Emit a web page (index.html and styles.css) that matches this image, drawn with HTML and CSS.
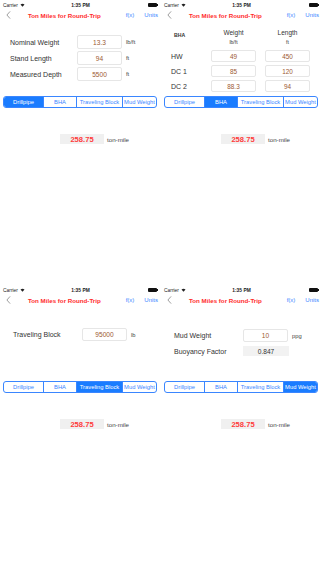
FILE: index.html
```html
<!DOCTYPE html>
<html lang="en">
<head>
    <meta charset="UTF-8">
    <meta name="viewport" content="width=device-width, initial-scale=1.0">
    <title>Ton Miles for Round-Trip</title>
    <link rel="stylesheet" href="styles.css">
</head>
<body>
<div class="grid">

    <!-- Drillpipe screen -->
    <section class="screen">
        <div class="status">
            <span class="carrier">Carrier <svg class="wifi" viewBox="0 0 10 8"><path d="M5 7.5 L1 3.2 A6 6 0 0 1 9 3.2 Z"/></svg></span>
            <span class="clock">1:35 PM</span>
            <span class="battery"></span>
        </div>
        <div class="navbar">
            <svg class="back" viewBox="0 0 6 10"><path d="M5 0.5 L1 5 L5 9.5"/></svg>
            <span class="title">Ton Miles for Round-Trip</span>
            <span class="nav-link fx">f(x)</span>
            <span class="nav-link">Units</span>
        </div>
        <div class="body body-dp">
            <div class="row">
                <span class="label">Nominal Weight</span>
                <span class="field">13.3</span>
                <span class="unit">lb/ft</span>
            </div>
            <div class="row">
                <span class="label">Stand Length</span>
                <span class="field">94</span>
                <span class="unit">ft</span>
            </div>
            <div class="row">
                <span class="label">Measured Depth</span>
                <span class="field">5500</span>
                <span class="unit">ft</span>
            </div>
        </div>
        <div class="segments">
            <span class="seg s1 active">Drillpipe</span>
            <span class="seg s2">BHA</span>
            <span class="seg s3">Traveling Block</span>
            <span class="seg s4">Mud Weight</span>
        </div>
        <div class="result">
            <span class="result-box">258.75</span>
            <span class="result-unit">ton-mile</span>
        </div>
    </section>

    <!-- BHA screen -->
    <section class="screen">
        <div class="status">
            <span class="carrier">Carrier <svg class="wifi" viewBox="0 0 10 8"><path d="M5 7.5 L1 3.2 A6 6 0 0 1 9 3.2 Z"/></svg></span>
            <span class="clock">1:35 PM</span>
            <span class="battery"></span>
        </div>
        <div class="navbar">
            <svg class="back" viewBox="0 0 6 10"><path d="M5 0.5 L1 5 L5 9.5"/></svg>
            <span class="title">Ton Miles for Round-Trip</span>
            <span class="nav-link fx">f(x)</span>
            <span class="nav-link">Units</span>
        </div>
        <div class="body body-bha">
            <div class="bha-grid">
                <span class="bha-head">BHA</span>
                <span class="col-head">Weight<small>lb/ft</small></span>
                <span class="col-head">Length<small>ft</small></span>

                <span class="bha-label">HW</span>
                <span class="field">49</span>
                <span class="field">450</span>

                <span class="bha-label">DC 1</span>
                <span class="field">85</span>
                <span class="field">120</span>

                <span class="bha-label">DC 2</span>
                <span class="field">88.3</span>
                <span class="field">94</span>
            </div>
        </div>
        <div class="segments">
            <span class="seg s1">Drillpipe</span>
            <span class="seg s2 active">BHA</span>
            <span class="seg s3">Traveling Block</span>
            <span class="seg s4">Mud Weight</span>
        </div>
        <div class="result">
            <span class="result-box">258.75</span>
            <span class="result-unit">ton-mile</span>
        </div>
    </section>

    <!-- Traveling Block screen -->
    <section class="screen">
        <div class="status">
            <span class="carrier">Carrier <svg class="wifi" viewBox="0 0 10 8"><path d="M5 7.5 L1 3.2 A6 6 0 0 1 9 3.2 Z"/></svg></span>
            <span class="clock">1:35 PM</span>
            <span class="battery"></span>
        </div>
        <div class="navbar">
            <svg class="back" viewBox="0 0 6 10"><path d="M5 0.5 L1 5 L5 9.5"/></svg>
            <span class="title">Ton Miles for Round-Trip</span>
            <span class="nav-link fx">f(x)</span>
            <span class="nav-link">Units</span>
        </div>
        <div class="body body-tb">
            <div class="row wide">
                <span class="label">Traveling Block</span>
                <span class="field">95000</span>
                <span class="unit">lb</span>
            </div>
        </div>
        <div class="segments">
            <span class="seg s1">Drillpipe</span>
            <span class="seg s2">BHA</span>
            <span class="seg s3 active">Traveling Block</span>
            <span class="seg s4">Mud Weight</span>
        </div>
        <div class="result">
            <span class="result-box">258.75</span>
            <span class="result-unit">ton-mile</span>
        </div>
    </section>

    <!-- Mud Weight screen -->
    <section class="screen">
        <div class="status">
            <span class="carrier">Carrier <svg class="wifi" viewBox="0 0 10 8"><path d="M5 7.5 L1 3.2 A6 6 0 0 1 9 3.2 Z"/></svg></span>
            <span class="clock">1:35 PM</span>
            <span class="battery"></span>
        </div>
        <div class="navbar">
            <svg class="back" viewBox="0 0 6 10"><path d="M5 0.5 L1 5 L5 9.5"/></svg>
            <span class="title">Ton Miles for Round-Trip</span>
            <span class="nav-link fx">f(x)</span>
            <span class="nav-link">Units</span>
        </div>
        <div class="body body-mw">
            <div class="row wide">
                <span class="label">Mud Weight</span>
                <span class="field">10</span>
                <span class="unit">ppg</span>
            </div>
            <div class="row wide short">
                <span class="label">Buoyancy Factor</span>
                <span class="readout">0.847</span>
            </div>
        </div>
        <div class="segments">
            <span class="seg s1">Drillpipe</span>
            <span class="seg s2">BHA</span>
            <span class="seg s3">Traveling Block</span>
            <span class="seg s4 active">Mud Weight</span>
        </div>
        <div class="result">
            <span class="result-box">258.75</span>
            <span class="result-unit">ton-mile</span>
        </div>
    </section>

</div>
</body>
</html>
```

FILE: styles.css
```css
/* Four phone screens of the ton-mile calculator, shown in a 2x2 grid */
body {
    margin: 0;
    font-family: 'Liberation Sans', Arial, sans-serif;
    background-color: #fff;
    color: #333;
}
.grid {
    display: grid;
    grid-template-columns: 161px 161px;
    grid-template-rows: 285px 287px;
    width: 322px;
}
.screen {
    display: flex;
    flex-direction: column;
    overflow: hidden;
}

/* Status bar */
.status {
    height: 10px;
    display: flex;
    align-items: center;
    justify-content: space-between;
    padding: 0 3px;
    font-size: 4.9px;
    color: #222;
}
.carrier {
    display: flex;
    align-items: center;
    gap: 2px;
    width: 40px;
}
.wifi {
    width: 5px;
    height: 4px;
    fill: #222;
}
.clock {
    font-weight: bold;
}
.battery {
    width: 40px;
    height: 4px;
    display: flex;
    justify-content: flex-end;
}
.battery::before {
    content: "";
    width: 9px;
    height: 4px;
    background-color: #111;
    border-radius: 1px;
}
.battery::after {
    content: "";
    width: 1px;
    height: 2px;
    margin-top: 1px;
    background-color: #111;
}

/* Navigation bar */
.navbar {
    height: 10px;
    display: flex;
    align-items: center;
    padding: 0 3px 0 6px;
}
.back {
    width: 5px;
    height: 8px;
    fill: none;
    stroke: #666;
    stroke-width: 0.8;
}
.title {
    margin-left: 17px;
    font-size: 6.2px;
    font-weight: bold;
    color: #ff2a2a;
    flex-grow: 1;
}
.nav-link {
    font-size: 6px;
    color: #3a86ff;
}
.nav-link.fx {
    margin-right: 10px;
}

/* Form area above the segmented control */
.body {
    height: 76px;
    box-sizing: border-box;
    display: flex;
    flex-direction: column;
}
.body-dp {
    padding: 15px 0 0 10px;
    gap: 2px;
}
.body-tb {
    padding: 23px 0 0 13px;
}
.body-mw {
    padding: 24px 0 0 13px;
    gap: 4px;
}
.row {
    display: flex;
    align-items: center;
    height: 14px;
}
.label {
    width: 67px;
    font-size: 7px;
    color: #333;
}
.row.wide {
    height: 13px;
}
.row.wide .label {
    width: 69px;
}
.row.short {
    height: 10px;
}
.field {
    width: 45px;
    height: 100%;
    box-sizing: border-box;
    border: 1px solid #e6e6e6;
    border-radius: 2px;
    display: flex;
    align-items: center;
    justify-content: center;
    font-size: 6.6px;
    color: #9c5a33;
    background-color: #fff;
}
.unit {
    margin-left: 4px;
    font-size: 5.8px;
    color: #444;
}
.readout {
    width: 46px;
    height: 100%;
    display: flex;
    align-items: center;
    justify-content: center;
    background-color: #f2f2f2;
    font-size: 6.6px;
    color: #333;
}

/* BHA table */
.body-bha {
    padding: 9px 0 0 10px;
}
.bha-grid {
    display: grid;
    grid-template-columns: 31px 45px 45px;
    grid-template-rows: 18px 12px 12px 12px;
    column-gap: 9px;
    row-gap: 3px;
    align-items: center;
}
.bha-grid .field {
    font-size: 6.4px;
}
.bha-head {
    font-size: 5.2px;
    font-weight: bold;
    padding-left: 3px;
    align-self: start;
    padding-top: 3px;
}
.col-head {
    display: flex;
    flex-direction: column;
    align-items: center;
    font-size: 6.5px;
    color: #333;
    line-height: 8.5px;
    align-self: start;
}
.col-head small {
    font-size: 5px;
}
.bha-label {
    font-size: 7px;
}

/* Segmented control */
.segments {
    display: flex;
    height: 12px;
    margin: 0 4px 0 3px;
    border: 1px solid #3a86ff;
    border-radius: 3px;
    box-sizing: border-box;
    overflow: hidden;
}
.seg {
    display: flex;
    align-items: center;
    justify-content: center;
    font-size: 5.8px;
    color: #3a86ff;
    border-left: 1px solid #3a86ff;
}
.seg.s1 { width: 39px; border-left: none; }
.seg.s2 { width: 32px; }
.seg.s3 { width: 45px; }
.seg.s4 { flex-grow: 1; }
.seg.active {
    background-color: #1a7cff;
    color: #fff;
}

/* Result line */
.result {
    display: flex;
    align-items: center;
    gap: 3px;
    margin-top: 26px;
    padding-left: 60px;
}
.result-box {
    width: 44px;
    height: 10px;
    display: flex;
    align-items: center;
    justify-content: center;
    background-color: #f0f0f0;
    font-size: 7.6px;
    font-weight: bold;
    color: #ff3b3b;
}
.result-unit {
    font-size: 6.2px;
    color: #444;
}
```
